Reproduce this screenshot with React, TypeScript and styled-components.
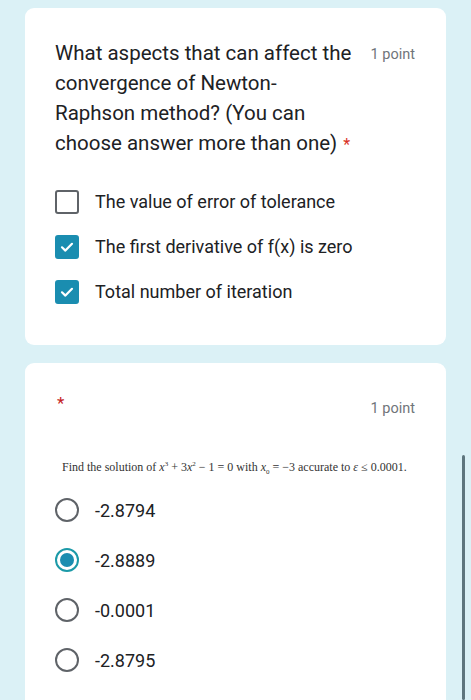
import React, { FunctionComponent } from 'react';
import styled, { createGlobalStyle } from 'styled-components';

const GlobalStyle = createGlobalStyle`
  html, body {
    margin: 0;
    padding: 0;
    background: #dbf1f6;
    font-family: Roboto, "Noto Sans", Arial, sans-serif;
    color: #202124;
  }
`;

type CheckOption = { label: string; checked: boolean };
type RadioOption = { label: string; selected: boolean };

const checkOptions: CheckOption[] = [
  { label: 'The value of error of tolerance', checked: false },
  { label: 'The first derivative of f(x) is zero', checked: true },
  { label: 'Total number of iteration', checked: true },
];

const radioOptions: RadioOption[] = [
  { label: '-2.8794', selected: false },
  { label: '-2.8889', selected: true },
  { label: '-0.0001', selected: false },
  { label: '-2.8795', selected: false },
];

const CheckIcon = () => (
  <svg width="16" height="16" viewBox="0 0 16 16">
    <path d="M3 8.3 L6.4 11.6 L13 4.8" fill="none" stroke="#fff" strokeWidth="2.2" strokeLinecap="round" strokeLinejoin="round" />
  </svg>
);

const App: FunctionComponent = () => {
  return (
    <Page>
      <GlobalStyle />
      <Card>
        <TitleRow>
          <Title>
            What aspects that can affect the convergence of Newton-Raphson method? (You can choose answer more than one)
            <Required>*</Required>
          </Title>
          <Points>1 point</Points>
        </TitleRow>
        <OptionList>
          {checkOptions.map((o) => (
            <CheckRow key={o.label}>
              <CheckBox $checked={o.checked}>{o.checked && <CheckIcon />}</CheckBox>
              <OptionLabel>{o.label}</OptionLabel>
            </CheckRow>
          ))}
        </OptionList>
      </Card>
      <Card $tall>
        <HeaderRow>
          <Star>*</Star>
          <Points $low>1 point</Points>
        </HeaderRow>
        <Equation>
          Find the solution of <i>x</i>
          <sup>3</sup> + 3<i>x</i>
          <sup>2</sup> − 1 = 0 with <i>x</i>
          <sub>0</sub> = −3 accurate to <i>ε</i> ≤ 0.0001.
        </Equation>
        <RadioList>
          {radioOptions.map((o) => (
            <RadioRow key={o.label}>
              <Radio $selected={o.selected} />
              <RadioLabel>{o.label}</RadioLabel>
            </RadioRow>
          ))}
        </RadioList>
      </Card>
      <ScrollThumb />
    </Page>
  );
};

export default App;

const Page = styled.div`
  display: flex;
  flex-direction: column;
  gap: 18px;
  padding: 8px 25px 0 25px;
  height: 700px;
  box-sizing: border-box;
  overflow: hidden;
  position: relative;
`;

const Card = styled.div<{ $tall?: boolean }>`
  background: #fff;
  border-radius: 9px;
  padding: 30px 31px ${(p) => (p.$tall ? '80px' : '31px')} 30px;
  flex-shrink: 0;
`;

const TitleRow = styled.div`
  display: flex;
  align-items: flex-start;
`;

const Title = styled.div`
  flex: 1;
  font-size: 20.5px;
  line-height: 30px;
  color: #202124;
`;

const Required = styled.span`
  color: #d93025;
  font-size: 16px;
  margin-left: 6px;
`;

const Points = styled.div<{ $low?: boolean }>`
  margin-left: 14px;
  margin-top: ${(p) => (p.$low ? '1px' : '2px')};
  font-size: 14.5px;
  line-height: 30px;
  color: #70757a;
  white-space: nowrap;
`;

const OptionList = styled.div`
  margin-top: 19px;
  display: flex;
  flex-direction: column;
`;

const CheckRow = styled.div`
  display: flex;
  align-items: center;
  height: 45px;
`;

const CheckBox = styled.div<{ $checked: boolean }>`
  width: 24px;
  height: 24px;
  box-sizing: border-box;
  border-radius: 3px;
  border: 2px solid ${(p) => (p.$checked ? '#1a8db0' : '#5f6368')};
  background: ${(p) => (p.$checked ? '#1a8db0' : '#fff')};
  display: flex;
  align-items: center;
  justify-content: center;
  flex-shrink: 0;
`;

const OptionLabel = styled.span`
  margin-left: 16px;
  font-size: 18px;
  color: #202124;
`;

const HeaderRow = styled.div`
  display: flex;
  justify-content: space-between;
  align-items: flex-start;
  padding-left: 2px;
`;

const Star = styled.span`
  color: #c5221f;
  font-size: 17px;
  line-height: 20px;
`;

const Equation = styled.div`
  margin-top: 35px;
  padding-left: 7px;
  font-family: "Liberation Serif", "Times New Roman", serif;
  font-size: 12px;
  line-height: 16px;
  color: #333;
  white-space: nowrap;

  sup,
  sub {
    font-size: 7px;
    line-height: 0;
  }
`;

const RadioList = styled.div`
  margin-top: 10px;
  display: flex;
  flex-direction: column;
`;

const RadioRow = styled.div`
  display: flex;
  align-items: center;
  height: 50px;
`;

const Radio = styled.div<{ $selected: boolean }>`
  width: 24px;
  height: 24px;
  box-sizing: border-box;
  border-radius: 50%;
  border: 2.5px solid ${(p) => (p.$selected ? '#1c9aa8' : '#5f6368')};
  flex-shrink: 0;
  position: relative;

  &::after {
    content: '';
    display: ${(p) => (p.$selected ? 'block' : 'none')};
    position: absolute;
    inset: 3px;
    border-radius: 50%;
    background: #1a8db0;
  }
`;

const RadioLabel = styled.span`
  margin-left: 16px;
  font-size: 18px;
  color: #202124;
`;

const ScrollThumb = styled.div`
  position: absolute;
  left: 462px;
  top: 455px;
  width: 3px;
  height: 245px;
  background: #5e757d;
  border-radius: 2px;
`;
